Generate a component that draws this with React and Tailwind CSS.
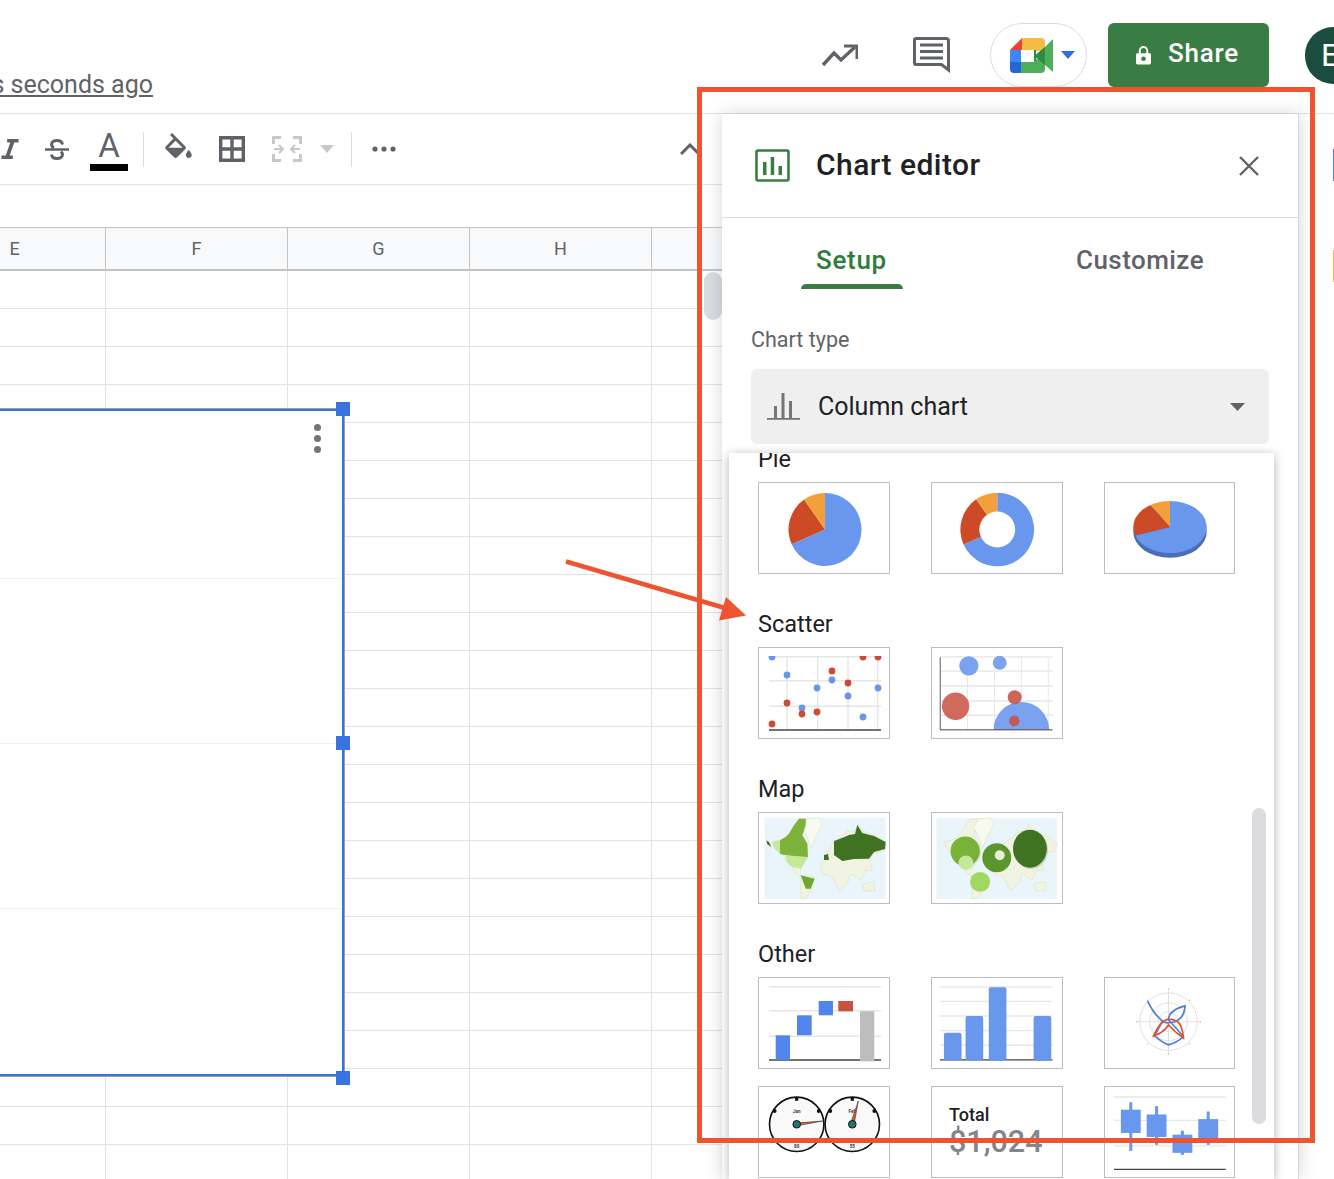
import React from 'react'

const rows = Array.from({ length: 24 }, (_, i) => i)
const columns = ['E', 'F', 'G', 'H', '']

function polar(cx, cy, r, deg) {
  const a = ((deg - 90) * Math.PI) / 180
  return [cx + r * Math.cos(a), cy + r * Math.sin(a)]
}

function slice(cx, cy, r, from, to) {
  const [x1, y1] = polar(cx, cy, r, from)
  const [x2, y2] = polar(cx, cy, r, to)
  const large = to - from > 180 ? 1 : 0
  return `M${cx} ${cy}L${x1} ${y1}A${r} ${r} 0 ${large} 1 ${x2} ${y2}Z`
}

function Thumb({ children, className = '' }) {
  return (
    <div className={`w-full h-[92px] border-[1.5px] border-[#bdbdbd] bg-white overflow-hidden ${className}`}>
      {children}
    </div>
  )
}

function ThumbSvg({ children }) {
  return (
    <Thumb>
      <svg viewBox="0 0 130 90" className="w-full h-full block">
        {children}
      </svg>
    </Thumb>
  )
}

function Lines({ ys, x1 = 10, x2 = 122, stroke = '#e6e6e6' }) {
  return ys.map((y) => <line key={y} x1={x1} x2={x2} y1={y} y2={y} stroke={stroke} strokeWidth="1.4" />)
}

function PieChart() {
  return (
    <ThumbSvg>
      <path d={slice(66, 46.5, 36.5, 0, 246)} fill="#6a97ee" />
      <path d={slice(66, 46.5, 36.5, 246, 325)} fill="#cc4a26" />
      <path d={slice(66, 46.5, 36.5, 325, 360)} fill="#f2a13a" />
    </ThumbSvg>
  )
}

function DonutChart() {
  return (
    <ThumbSvg>
      <path d={slice(65.5, 46.5, 37, 0, 246)} fill="#6a97ee" />
      <path d={slice(65.5, 46.5, 37, 246, 325)} fill="#cc4a26" />
      <path d={slice(65.5, 46.5, 37, 325, 360)} fill="#f2a13a" />
      <circle cx="65.5" cy="46.5" r="18" fill="#fff" />
    </ThumbSvg>
  )
}

function Pie3d() {
  return (
    <ThumbSvg>
      <ellipse cx="65.5" cy="49" rx="37" ry="26" fill="#4b6fb4" />
      <g transform="translate(65.5 44) scale(1 0.71)">
        <path d={slice(0, 0, 37, 0, 251)} fill="#6a97ee" />
        <path d={slice(0, 0, 37, 251, 328)} fill="#cc4a26" />
        <path d={slice(0, 0, 37, 328, 360)} fill="#f2a13a" />
      </g>
    </ThumbSvg>
  )
}

function ScatterChart() {
  const blue = [[13, 9], [28, 27], [58, 40], [73, 32], [89, 48], [119, 40], [43, 60], [104, 69]]
  const red = [[13, 76], [28, 55], [43, 66], [58, 64], [73, 23], [89, 35], [104, 9], [119, 9]]
  return (
    <ThumbSvg>
      <Lines ys={[8.7, 32.7, 58.3]} />
      {[28, 58.7, 89, 118.7].map((x) => (
        <line key={x} x1={x} x2={x} y1="9" y2="82" stroke="#e6e6e6" strokeWidth="1.4" />
      ))}
      {blue.map(([x, y]) => <circle key={`b${x}`} cx={x} cy={y} r="3.4" fill="#6a97ee" />)}
      {red.map(([x, y]) => <circle key={`r${x}`} cx={x} cy={y} r="3.4" fill="#cc4b37" />)}
      <rect x="0" y="0" width="130" height="8" fill="#fff" />
      <line x1="10" x2="122" y1="82" y2="82" stroke="#444" strokeWidth="1.5" />
    </ThumbSvg>
  )
}

function BubbleChart() {
  return (
    <ThumbSvg>
      <Lines ys={[8.7, 23, 38, 53, 67.3]} x1={8} x2={121} />
      {[35.7, 62.7, 89.7, 116.7].map((x) => (
        <line key={x} x1={x} x2={x} y1="9" y2="82" stroke="#e6e6e6" strokeWidth="1" />
      ))}
      <circle cx="37" cy="17.7" r="9.7" fill="#7ba2f0" />
      <circle cx="68" cy="14.7" r="7" fill="#7ba2f0" />
      <circle cx="23.7" cy="58.3" r="13.7" fill="#cf6a5c" />
      <path d="M61.7 82A28 28 0 0 1 117.7 82Z" fill="#7ba2f0" />
      <circle cx="83" cy="49.3" r="7" fill="#c9584d" fillOpacity="0.92" />
      <circle cx="82.7" cy="73" r="5.3" fill="#c05a5c" />
      <line x1="8.3" x2="8.3" y1="9" y2="82" stroke="#777" strokeWidth="1.2" />
      <line x1="8" x2="121" y1="82" y2="82" stroke="#444" strokeWidth="1" />
    </ThumbSvg>
  )
}

function Land({ x }) {
  return (
    <g fill="#f0f3e2" stroke="#dfe6c8" strokeWidth="0.8" transform={`translate(${x} 0)`}>
      <path d="M13.300 29L21 27.300L26.700 24L30 20.700L35 12.300L40 5.700L46.700 5.700L43.300 22.300L48.300 30.700L49 44L41.700 55.700L41.700 64L36.700 60.700L33.300 54L27.700 49L24 42.300L15.700 35.700Z" />
      <path d="M41.700 62.300L55 64L53.300 75.700L46.700 85.700L41.700 85.700Z" />
      <path d="M48.300 5.700L60 4.700L63.300 10.700L56.700 24L51.700 35.700L48.300 24L43.300 14Z" fill="#f8faef" />
      <path d="M61.700 50.700L66.700 44L73 30L81.700 25L88 18L96 18L98.300 10.700L104 18L115 22L127 30L125 38L115 40L111 46L113.300 57.300L106.700 57.300L101.700 67.300L91.700 60.700L88.300 70.700L80 78L73.300 64L63.300 60.700Z" />
      <path d="M103.300 70.700L115 69L115.700 78L105 78Z" />
    </g>
  )
}

function WorldMap() {
  return (
    <ThumbSvg>
      <rect x="5.7" y="4.7" width="121" height="81.3" fill="#eaf5fb" />
      <Land x={0} />
      <path d="M21 27.300L26.700 24L30 20.700L35 12.300L40 5.700L46.700 5.700L46.700 12.300L43.300 22.300L48.300 30.700L49 44L41.700 44L26.700 42.300L21 40.700Z" fill="#7db33c" />
      <path d="M13.300 29L21 27.300L21 40.700L15.700 35.700Z" fill="#c5e99b" />
      <path d="M7.300 27.300L10 29L12.300 34L8.300 31.300Z" fill="#3f7322" />
      <path d="M26.700 42.300L49 44L41.700 55.700L33.300 54L27.700 49Z" fill="#c5e99b" />
      <path d="M41.700 62.300L55.700 65.700L51.700 75.700L46.700 75.700Z" fill="#6fa82f" />
      <path d="M75 28L83 25L90 22L96 21L98.300 12L103.300 20L115 23L126.700 29L126 36L115 39L110 45.700L95 46L83.300 48L75 42Z" fill="#3f7322" />
      <path d="M65 42L69 41L70 47L65 47Z" fill="#3f7322" />
    </ThumbSvg>
  )
}

function BubbleMap() {
  return (
    <ThumbSvg>
      <rect x="4.3" y="4.7" width="121" height="81.3" fill="#eaf5fb" />
      <Land x={-1.4} />
      <circle cx="34" cy="39" r="15" fill="#d9dcc6" />
      <circle cx="33.3" cy="38" r="14.700" fill="#79b238" />
      <circle cx="34" cy="49.700" r="7.300" fill="#c5e99b" />
      <circle cx="48.300" cy="69" r="10" fill="#a0d860" />
      <circle cx="65" cy="44.700" r="14.500" fill="#5a962d" />
      <circle cx="68" cy="42.300" r="5" fill="#e9edd6" />
      <ellipse cx="99.500" cy="37" rx="17" ry="19" fill="#d0d3c0" />
      <ellipse cx="98.300" cy="35.700" rx="17" ry="19" fill="#3f7322" />
    </ThumbSvg>
  )
}

function WaterfallChart() {
  return (
    <ThumbSvg>
      <Lines ys={[8.7, 32.7, 58.3]} />
      <line x1="10" x2="122" y1="82" y2="82" stroke="#444" strokeWidth="1.4" />
      <rect x="16.7" y="57.3" width="14.3" height="24.7" fill="#5185ec" />
      <rect x="38" y="37.3" width="14.7" height="20" fill="#5185ec" />
      <rect x="59.7" y="23" width="14.3" height="14.3" fill="#5185ec" />
      <rect x="79.3" y="23" width="14.7" height="10.3" fill="#cc5040" />
      <rect x="101" y="33.3" width="14.3" height="50" fill="#bdbdbd" />
    </ThumbSvg>
  )
}

function ColumnsChart() {
  return (
    <ThumbSvg>
      <Lines ys={[8.7, 23.3, 38, 52.7, 67.3]} x1={8} x2={121} />
      <line x1="8" x2="121" y1="82" y2="82" stroke="#444" strokeWidth="1.4" />
      {[[12, 54.7, 28], [33.7, 38, 44.7], [57, 9, 73.7], [102, 38, 44.7]].map(([x, y, h]) => (
        <rect key={x} x={x} y={y} width="17.7" height={h} rx="2" fill="#6a97ee" />
      ))}
    </ThumbSvg>
  )
}

function RadarChart() {
  return (
    <ThumbSvg>
      {[29, 19, 10].map((r) => <circle key={r} cx="64" cy="43.7" r={r} fill="none" stroke="#d8d8d8" strokeWidth="0.8" />)}
      <line x1="33" x2="95" y1="43.7" y2="43.7" stroke="#d8d8d8" strokeWidth="0.8" />
      <line x1="64" x2="64" y1="13" y2="75" stroke="#d8d8d8" strokeWidth="0.8" />
      {[[32, 43.7], [96, 43.7], [64, 11], [64, 76], [43, 22], [85, 22], [43, 66], [85, 66]].map(([x, y]) => (
        <circle key={`${x}-${y}`} cx={x} cy={y} r="0.7" fill="#aaa" />
      ))}
      <path d="M43 23Q49 36 58 43L50 58Q58 65 64 67Q72 65 79 59Q72 50 64 42Q64 32 80.700 27.700Q80 40 70 44Q60 46 58 43" fill="none" stroke="#4f7fdc" strokeWidth="1.700" />
      <path d="M64 41Q56 42 49 58Q59 55 64 47Q70 54 79 60Q78 46 72 43Q68 41 64 41Z" fill="none" stroke="#dd5530" strokeWidth="1.800" />
    </ThumbSvg>
  )
}

function Gauge({ cx, label, value, tipX, tipY }) {
  return (
    <g>
      <circle cx={cx} cy="37.3" r="27.2" fill="#f9f9f9" stroke="#111" strokeWidth="1.6" />
      <rect x={cx - 1.6} y="10.6" width="3.2" height="3.2" fill="#111" />
      <circle cx={cx - 22} cy="24" r="1.9" fill="#111" />
      <circle cx={cx + 22} cy="24" r="1.9" fill="#111" />
      <text x={cx} y="25.5" textAnchor="middle" fontSize="4.5" fontWeight="700" fill="#333">{label}</text>
      <text x={cx} y="60.5" textAnchor="middle" fontSize="4.5" fontWeight="700" fill="#333">{value}</text>
      <polygon points={`${cx - 1.6},${36} ${tipX},${tipY} ${cx + 1.6},${38.6}`} fill="#dd5530" stroke="#222" strokeWidth="0.5" />
      <circle cx={cx} cy="37.3" r="3.8" fill="#1f7a6d" stroke="#111" strokeWidth="1" />
    </g>
  )
}

function GaugeChart() {
  return (
    <ThumbSvg>
      <Gauge cx={37.7} label="Jan" value="80" tipX={63.7} tipY={34} />
      <Gauge cx={93.3} label="Feb" value="55" tipX={99.3} tipY={14} />
    </ThumbSvg>
  )
}

function TotalTile() {
  return (
    <Thumb className="pl-[17px] pt-[19px] leading-none">
      <div className="text-[18px] font-medium text-[#202124]">Total</div>
      <div className="mt-[3px] text-[30.5px] font-medium text-[#80868b]">$1,024</div>
    </Thumb>
  )
}

function CandleChart() {
  const candles = [
    [26, 15, 64, 22.5, 46],
    [52, 19, 58, 27.3, 50],
    [78, 43.7, 68, 47.7, 66],
    [104, 24.3, 58, 32, 55],
  ]
  return (
    <ThumbSvg>
      <Lines ys={[9.7, 33.3, 59]} x1={9} x2={121.7} />
      <line x1="9" x2="121.7" y1="82.7" y2="82.7" stroke="#444" strokeWidth="1.2" />
      {candles.map(([x, y1, y2, top, bottom]) => (
        <g key={x} fill="#6a97ee">
          <rect x={x - 1.5} y={y1} width="3" height={y2 - y1} />
          <rect x={x - 10} y={top} width="20" height={bottom - top} />
        </g>
      ))}
    </ThumbSvg>
  )
}

function Section({ title, children }) {
  return (
    <section className="mb-[36px]">
      <h3 className="h-[28px] mb-[9px] text-[23.5px] leading-[28px] text-[#202124]">{title}</h3>
      <div className="grid grid-cols-[132px_131.5px_131px] gap-x-[41px] gap-y-[17px]">{children}</div>
    </section>
  )
}

function Toolbar() {
  return (
    <div className="h-[71px] border-b-[1.5px] border-[#e2e2e2] flex items-center pr-[22px] text-[#5f6368]">
      <svg viewBox="0 0 24 24" className="w-[34px] h-[34px] -ml-[7px] shrink-0" fill="#5f6368">
        <path d="M10 5v2.400h2.200L9 16.600H6V19h8v-2.400h-2.200L15 7.400h3V5z" />
      </svg>
      <svg viewBox="0 0 24 24" className="w-[24px] h-[28px] ml-[18px] shrink-0" fill="none" stroke="#5f6368" strokeWidth="3">
        <path d="M17.500 7.500C17 4.500 14.500 3.500 12 3.500C9 3.500 6.500 5 6.500 7.500C6.500 9 7.500 10 9 10.800" />
        <path d="M16 14.500C17 15.500 17.500 16.500 17.500 17.500C17.500 20 15 21.500 12 21.500C9 21.500 6.800 20.300 6.500 17.500" />
        <path d="M0 12.500H24" strokeWidth="2.500" />
      </svg>
      <div className="relative w-[38px] h-[44px] ml-[21px] shrink-0 flex flex-col items-center">
        <span className="text-[33px] leading-[38px] text-[#5f6368]">A</span>
        <span className="absolute bottom-0 left-0 w-full h-[7px] bg-black" />
      </div>
      <span className="w-px h-[35px] ml-[15px] bg-[#dadce0] shrink-0" />
      <svg viewBox="3 0 18 17" className="w-[27px] h-[25px] ml-[21px] shrink-0 -mt-[7px]" fill="#5f6368">
        <path d="M16.560 8.940L7.620 0 6.210 1.410l2.380 2.380-5.150 5.150c-.59.59-.59 1.540 0 2.120l5.500 5.500c.29.29.68.44 1.060.44s.77-.15 1.060-.44l5.500-5.500c.59-.58.59-1.530 0-2.120zM5.210 10L10 5.210 14.790 10H5.210zM19 11.500s-2 2.170-2 3.500c0 1.100.9 2 2 2s2-.9 2-2c0-1.330-2-3.500-2-3.500z" />
      </svg>
      <svg viewBox="0 0 26 26" className="w-[26px] h-[26px] ml-[27px] shrink-0" fill="none" stroke="#5f6368" strokeWidth="3.400">
        <path d="M1.700 1.700H24.300V24.300H1.700ZM13 2V24M2 13H24" />
      </svg>
      <svg viewBox="0 0 30 26" className="w-[30px] h-[26px] ml-[27px] shrink-0" fill="none" stroke="#c8c8c8" strokeWidth="3">
        <path d="M9 1.500H1.500V8M21 1.500H28.500V8M9 24.500H1.500V18M21 24.500H28.500V18" />
        <path d="M2 13H11M7 9L11 13L7 17M28 13H19M23 9L19 13L23 17" strokeWidth="2.200" />
      </svg>
      <svg viewBox="0 0 14 8" className="w-[14px] h-[8px] ml-[18px] shrink-0" fill="#c8c8c8">
        <path d="M0 0H14L7 8Z" />
      </svg>
      <span className="w-px h-[35px] ml-[17px] bg-[#dadce0] shrink-0" />
      <svg viewBox="0 0 24 6" className="w-[24px] h-[6px] ml-[20px] shrink-0" fill="#5f6368">
        <circle cx="3" cy="3" r="2.600" />
        <circle cx="12" cy="3" r="2.600" />
        <circle cx="21" cy="3" r="2.600" />
      </svg>
      <svg viewBox="0 0 20 12" className="w-[20px] h-[12px] ml-auto shrink-0" fill="none" stroke="#5f6368" strokeWidth="3">
        <path d="M1 11L10 2L19 11" />
      </svg>
    </div>
  )
}

function SheetGrid() {
  return (
    <>
      <div className="h-[42px]" />
      <div className="h-[44px] -ml-[76px] grid grid-cols-[182px_182px_182px_182px_182px] bg-[#f8f9fa] border-t-[1.5px] border-b-[2px] border-[#c4c4c4]">
        {columns.map((c, i) => (
          <div key={i} className="border-r-[1.5px] border-[#c4c4c4] flex items-center justify-center text-[18px] text-[#5f6368]">{c}</div>
        ))}
      </div>
      {rows.map((r) => (
        <div key={r} className="h-[38px] -ml-[76px] grid grid-cols-[182px_182px_182px_182px_182px] border-b-[1.5px] border-[#e2e2e2]">
          {columns.map((c, i) => (
            <div key={i} className="border-r-[1.5px] border-[#e2e2e2]" />
          ))}
        </div>
      ))}
    </>
  )
}

function ChartObject() {
  const handle = 'absolute w-[14px] h-[14px] bg-[#3873e0]'
  return (
    <div className="absolute left-[-10px] top-[294px] w-[355px] h-[669px] bg-white border-t-[1.5px] border-r-[1.5px] border-b-[1.5px] border-[#9e9e9e]">
      <div className="h-full border-t-[2px] border-r-[2px] border-b-[2px] border-[#3873e0] flex flex-col pt-[167px]">
        <div className="h-[165px] border-t-[1.5px] border-[#f1f1f1]" />
        <div className="h-[165px] border-t-[1.5px] border-[#f1f1f1]" />
        <div className="border-t-[1.5px] border-[#f1f1f1]" />
      </div>
      <div className="absolute left-[324px] top-[15px] flex flex-col gap-[4px]">
        <span className="w-[7px] h-[7px] rounded-full bg-[#757575]" />
        <span className="w-[7px] h-[7px] rounded-full bg-[#757575]" />
        <span className="w-[7px] h-[7px] rounded-full bg-[#757575]" />
      </div>
      <span className={`${handle} left-[346px] top-[-7px]`} />
      <span className={`${handle} left-[346px] top-[327px]`} />
      <span className={`${handle} right-[-6px] bottom-[-9px]`} />
    </div>
  )
}

function ChartPopup() {
  return (
    <div className="absolute left-[7px] top-[339px] w-[545px] h-[726px] bg-white overflow-hidden shadow-[0_2px_10px_rgba(0,0,0,0.3)] pl-[29px]">
      <div className="-mt-[8px]">
        <Section title="Pie">
          <PieChart />
          <DonutChart />
          <Pie3d />
        </Section>
        <Section title="Scatter">
          <ScatterChart />
          <BubbleChart />
        </Section>
        <Section title="Map">
          <WorldMap />
          <BubbleMap />
        </Section>
        <Section title="Other">
          <WaterfallChart />
          <ColumnsChart />
          <RadarChart />
          <GaugeChart />
          <TotalTile />
          <CandleChart />
        </Section>
      </div>
      <div className="absolute left-[523px] top-[355px] w-[14px] h-[316px] rounded-full bg-[#dadce0]" />
    </div>
  )
}

function ChartEditor() {
  return (
    <aside className="relative w-[577px] shrink-0 bg-white border-r-[1.5px] border-[#d5d5d8] shadow-[0_0_18px_rgba(0,0,0,0.16)]">
      <div className="h-[104px] border-b-[1.5px] border-[#dadce0] flex items-center pl-[33px] pr-[39px]">
        <svg viewBox="0 0 35 33" className="w-[35px] h-[33px] shrink-0" fill="#3a7d44">
          <rect x="1.500" y="1.500" width="32" height="30" rx="1.500" fill="none" stroke="#3a7d44" strokeWidth="2.600" />
          <rect x="8" y="13" width="3.500" height="13" />
          <rect x="15.700" y="8" width="3.500" height="18" />
          <rect x="23.500" y="17" width="3.500" height="9" />
        </svg>
        <h2 className="ml-[26px] -mt-[2px] text-[30px] tracking-[0.45px] font-medium text-[#202124]">Chart editor</h2>
        <svg viewBox="0 0 20 20" className="w-[20px] h-[20px] ml-auto" stroke="#5f6368" strokeWidth="2.400">
          <path d="M1 1L19 19M19 1L1 19" />
        </svg>
      </div>
      <div className="h-[68px] flex relative">
        <div className="w-[260px] pl-[94px] pt-[23px] flex flex-col items-start">
          <span className="relative text-[26px] leading-[38px] tracking-[0.7px] font-medium text-[#2e7d3c]">
            Setup
            <span className="absolute -left-[15px] -right-[16px] top-[43px] h-[5px] rounded-t-[5px] bg-[#3a7d44]" />
          </span>
        </div>
        <div className="pl-[94px] pt-[23px]">
          <span className="text-[26px] leading-[38px] tracking-[0.45px] font-medium text-[#5f6368]">Customize</span>
        </div>
      </div>
      <div className="px-[29px] pt-[38px]">
        <div className="text-[21.5px] leading-[32px] text-[#5f6368]">Chart type</div>
        <div className="mt-[13px] w-[518px] h-[75px] rounded-[6px] bg-[#efefef] flex items-center pl-[16px] pr-[24px]">
          <svg viewBox="0 0 33 27" className="w-[33px] h-[27px] shrink-0" fill="#757575">
            <rect x="7" y="13" width="3" height="12" />
            <rect x="14.500" y="0" width="3" height="25" />
            <rect x="22" y="8" width="3" height="17" />
            <rect x="0" y="25" width="33" height="1.800" />
          </svg>
          <span className="ml-[18px] text-[25px] text-[#202124]">Column chart</span>
          <svg viewBox="0 0 15 8" className="w-[15px] h-[8px] ml-auto" fill="#5f6368">
            <path d="M0 0H15L7.500 8Z" />
          </svg>
        </div>
      </div>
      <ChartPopup />
    </aside>
  )
}

function MeetButton() {
  return (
    <div className="w-[97px] h-[64px] ml-[40px] rounded-full border border-[#dadce0] flex items-center pl-[19px] shrink-0">
      <svg viewBox="0 0 44 35" className="w-[44px] h-[35px] shrink-0">
        <path d="M0 12L12 0V12Z" fill="#ea4335" />
        <path d="M12 0H31Q35 0 35 4V13H24V12H12Z" fill="#f4bc41" />
        <path d="M0 12H11V24H0Z" fill="#4285f4" />
        <path d="M0 24H11V35H4Q0 35 0 31Z" fill="#2565d4" />
        <path d="M11 24H24V21L35 22V31Q35 35 31 35H11Z" fill="#4fae5a" />
        <path d="M24 12H26V23H24ZM24 18L35 9V27Z" fill="#2f8a45" />
        <path d="M35 9L43 1V34L35 27Z" fill="#4fae5a" />
      </svg>
      <svg viewBox="0 0 14 8" className="w-[14px] h-[8px] ml-[7px] shrink-0" fill="#2a6fe0">
        <path d="M0 0H14L7 8Z" />
      </svg>
    </div>
  )
}

function Header() {
  return (
    <header className="h-[114px] border-b-[1.5px] border-[#e0e0e0] flex items-start">
      <div className="w-[153px] h-full flex justify-end items-end pb-[13px] shrink-0">
        <span className="whitespace-nowrap text-[25px] leading-[30px] text-[#5f6368] underline">s seconds ago</span>
      </div>
      <div className="ml-auto -mr-[27px] pt-[23px] flex items-center h-[87px]">
        <svg viewBox="0 0 36 23" className="w-[36px] h-[23px] shrink-0" fill="none" stroke="#5f6368" strokeWidth="3.400">
          <path d="M1 21L12 9L19 16L33 3" />
          <path d="M22 2H35V15" strokeWidth="3" />
        </svg>
        <svg viewBox="0 0 37 36" className="w-[37px] h-[36px] ml-[55px] shrink-0">
          <path d="M3 1.500H33Q35.500 1.500 35.500 4V33L28.500 27.500H3Q1.500 27.500 1.500 26V3Q1.500 1.500 3 1.500Z" fill="none" stroke="#5f6368" strokeWidth="3" />
          <path d="M7 8H30M7 14.500H30M7 21H30" stroke="#5f6368" strokeWidth="3" />
        </svg>
        <MeetButton />
        <button className="w-[161px] h-[64px] ml-[21px] rounded-[6px] bg-[#3a7d44] flex items-center justify-start pl-[28px] shrink-0">
          <svg viewBox="0 0 16 20" className="w-[15px] h-[20px] shrink-0" fill="#fff">
            <path d="M3 8V5.500a5 5 0 0 1 10 0V8h1.500Q16 8 16 9.500v9Q16 20 14.500 20h-13Q0 20 0 18.500v-9Q0 8 1.500 8zm2 0h6V5.500a3 3 0 0 0-6 0zm3 3.500a2.500 2.500 0 1 0 0 5 2.500 2.500 0 0 0 0-5z" fillRule="evenodd" />
          </svg>
          <span className="ml-[17px] -mt-[4px] text-[26px] tracking-[0.8px] font-medium text-white">Share</span>
        </button>
        <div className="w-[56px] h-[57px] ml-[36px] rounded-full bg-[#1b4d3e] text-white text-[32px] flex items-center pl-[16px] shrink-0">E</div>
      </div>
    </header>
  )
}

function Annotations() {
  return (
    <>
      <div className="absolute left-[697px] top-[87px] w-[618px] h-[1056px] border-[5px] border-[#ee5430] pointer-events-none" />
      <svg viewBox="0 0 1334 1179" className="absolute inset-0 w-full h-full pointer-events-none">
        <line x1="566" y1="561.500" x2="730" y2="609.500" stroke="#ee5430" strokeWidth="4.500" />
        <polygon points="746,615.500 726,597 719,620.500" fill="#ee5430" />
      </svg>
    </>
  )
}

export default function App() {
  return (
    <div className="relative w-[1334px] h-[1179px] overflow-hidden bg-white font-['Roboto',sans-serif]">
      <Header />
      <div className="flex h-[1065px]">
        <main className="relative w-[722px] shrink-0 overflow-hidden">
          <Toolbar />
          <SheetGrid />
          <ChartObject />
          <div className="absolute left-[704px] top-[158px] w-[18px] h-[48px] rounded-full bg-[#dadce0]" />
        </main>
        <ChartEditor />
        <div className="flex-1 flex flex-col items-end pt-[35px] gap-[69px]">
          <span className="w-[1.5px] h-[32px] bg-[#4285f4]" />
          <span className="w-[1.5px] h-[32px] bg-[#f4bc41]" />
        </div>
      </div>
      <Annotations />
    </div>
  )
}
